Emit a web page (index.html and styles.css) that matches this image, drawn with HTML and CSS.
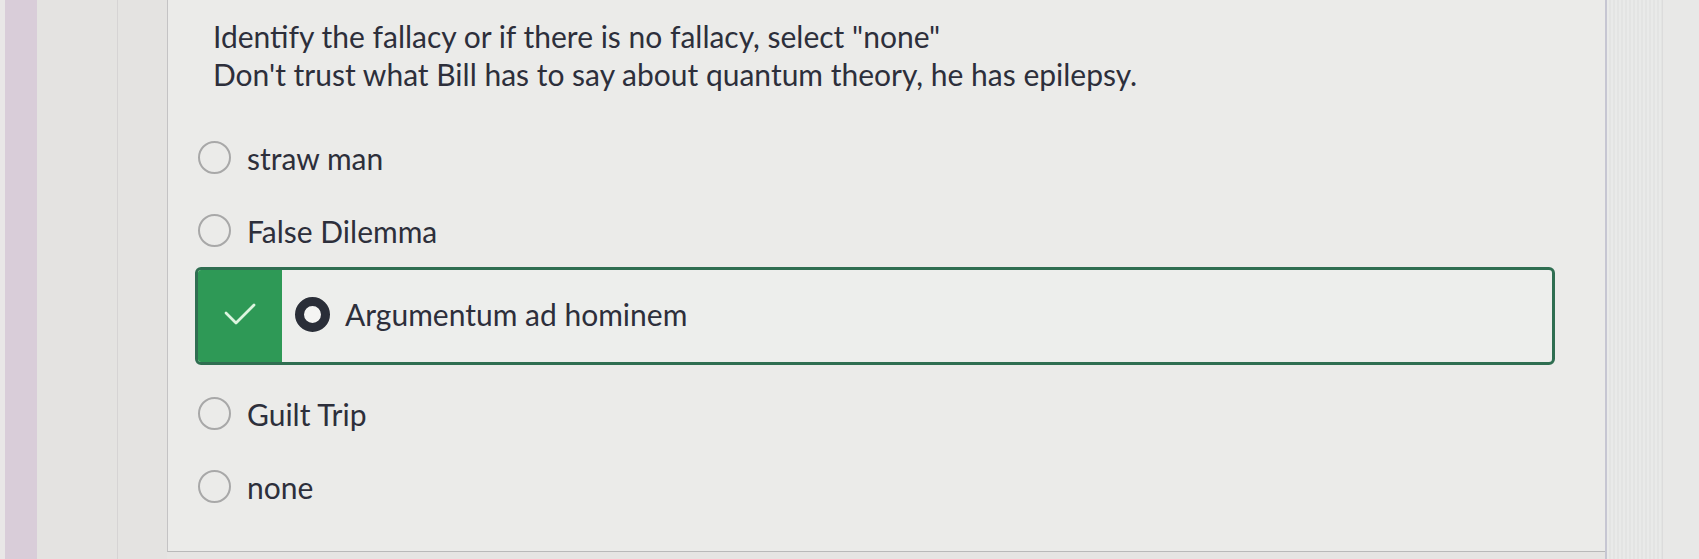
FILE: index.html
```html
<!DOCTYPE html>
<html lang="en">
<head>
<meta charset="utf-8">
<title>Quiz question</title>
<link rel="stylesheet" href="styles.css">
</head>
<body>
<div class="page">
  <div class="edge"></div>
  <div class="accent"></div>
  <div class="gutter"><div class="gutter-line"></div></div>
  <main class="card">
    <div class="prompt">
      <p class="prompt-line">Identify the fallacy or if there is no fallacy, select "none"</p>
      <p class="prompt-line">Don't trust what Bill has to say about quantum theory, he has epilepsy.</p>
    </div>
    <ul class="answers">
      <li class="answer"><span class="radio"></span><span class="label">straw man</span></li>
      <li class="answer"><span class="radio"></span><span class="label">False Dilemma</span></li>
      <li class="answer correct">
        <span class="flag">
          <svg class="check" width="32" height="22" viewBox="0 0 32 22"><polyline points="2,10 12,20 30,2" fill="none" stroke="#dcf5df" stroke-width="2.8" stroke-linecap="round" stroke-linejoin="round"/></svg>
        </span>
        <span class="radio selected"></span><span class="label">Argumentum ad hominem</span>
      </li>
      <li class="answer"><span class="radio"></span><span class="label">Guilt Trip</span></li>
      <li class="answer"><span class="radio"></span><span class="label">none</span></li>
    </ul>
  </main>
  <div class="side">
    <div class="side-stripe"></div>
    <div class="side-rest"></div>
  </div>
</div>
</body>
</html>
```
FILE: styles.css
```css
html, body {
  margin: 0;
  padding: 0;
}
body {
  background: #e6e5e3;
  font-family: Lato, "Open Sans", "Liberation Sans", sans-serif;
  color: #2d2f3b;
}
.page {
  display: flex;
  height: 559px;
  width: 1699px;
  overflow: hidden;
}
.edge {
  width: 5px;
  background: #e9e7e7;
}
.accent {
  width: 32px;
  background: #d9cdd9;
}
.gutter {
  width: 130px;
  background: #e4e3e1;
  display: flex;
}
.gutter-line {
  margin-left: 80px;
  width: 1px;
  background: #d6d4d4;
}
.card {
  width: 1438px;
  height: 552px;
  border-left: 1px solid #c4c3c4;
  border-bottom: 1px solid #b9b9b9;
  background: #ebebe9;
  box-sizing: border-box;
  padding: 17px 50px 0 27px;
}
.prompt {
  padding-left: 18px;
}
.prompt-line {
  margin: 0;
  font-size: 30px;
  line-height: 38px;
}
.answers {
  list-style: none;
  margin: 28px 0 0 0;
  padding: 0;
}
.answer {
  display: flex;
  align-items: center;
  height: 73px;
  padding-left: 3px;
  font-size: 30px;
}
.radio {
  width: 33px;
  height: 33px;
  box-sizing: border-box;
  border: 2px solid #a8a8a8;
  border-radius: 50%;
  flex: none;
}
.label {
  margin-left: 16px;
}
.answer.correct {
  height: 98px;
  margin: 0 0 12px 0;
  padding: 0 0 4px 0;
  border: 3px solid #2f6e51;
  border-radius: 6px;
  box-sizing: border-box;
  background: #edeeec;
  overflow: hidden;
}
.flag {
  align-self: stretch;
  margin-bottom: -4px;
  width: 84px;
  background: #2e9956;
  display: flex;
  align-items: center;
  justify-content: center;
  padding-bottom: 4px;
  box-sizing: border-box;
  flex: none;
}
.radio.selected {
  width: 35px;
  height: 35px;
  border: 9px solid #2a2e38;
  background: #f4f4f3;
  margin-left: 13px;
}
.correct .label {
  margin-left: 15px;
}
.side {
  flex: 1;
  display: flex;
  border-left: 2px solid #c6c6d2;
}
.side-stripe {
  width: 55px;
  background: repeating-linear-gradient(90deg, #e9eae9 0 2px, #e3e4e3 2px 4px);
  border-right: 1px solid #dcdcdc;
}
.side-rest {
  flex: 1;
  background: #e8e8e7;
}
```
